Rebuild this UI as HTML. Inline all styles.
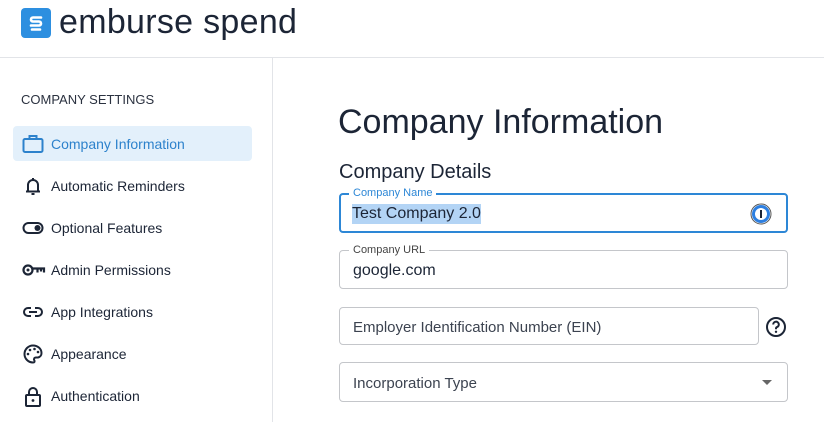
<!DOCTYPE html>
<html><head><style>
*{box-sizing:border-box;margin:0;padding:0}
body{width:824px;height:422px;overflow:hidden;background:#fff;font-family:"Liberation Sans",sans-serif;color:#1c2536;position:relative}
.hdr{position:absolute;left:0;top:0;width:824px;height:58px;border-bottom:1px solid #e2e4e8}
.side{position:absolute;left:272px;top:58px;width:1px;height:364px;background:#e2e4e8}
.abs{position:absolute}
.item{position:absolute;left:13px;width:239px;height:35px;display:flex;align-items:center;font-size:14px;color:#1c2536}
.item svg{position:absolute;left:9px;top:8px}
.item span{position:absolute;left:38px;top:10px}
.fld{position:absolute;left:339px;width:449px;border:1px solid #c4c6ca;border-radius:4px}
.fld .v{position:absolute;left:13px;font-size:16px;color:#1c2536}
.lbl{position:absolute;left:9px;top:-7px;background:#fff;padding:0 4px;font-size:11px;color:#444;line-height:12px}
.ph{position:absolute;left:13px;font-size:15px;color:#3c4350}
</style></head><body>
<div class="hdr">
 <div class="abs" style="left:21px;top:8px;width:30px;height:30px;background:#2d8fe0;border-radius:4px">
  <svg width="30" height="30" viewBox="0 0 30 30"><path d="M20 9.5H12a2 2 0 0 0 0 4h6a2 2 0 0 1 0 4H10M11 21.5h8" stroke="#fff" stroke-width="2.6" stroke-linecap="round" fill="none"/></svg>
 </div>
 <div class="abs" style="left:59px;top:0px;font-size:34px;line-height:44px;color:#1c2536;letter-spacing:0.3px">emburse spend</div>
</div>
<div class="side"></div>
<div class="abs" style="left:21px;top:92px;font-size:13px;color:#2b3240">COMPANY SETTINGS</div>
<div class="item" style="top:126px;background:#e3f0fb;border-radius:4px;color:#2d82cc">
 <svg width="22" height="20" viewBox="0 0 22 20"><rect x="1.5" y="5" width="19" height="13" rx="1.5" fill="none" stroke="#2d82cc" stroke-width="2"/><path d="M7.5 5V2h7v3" fill="none" stroke="#2d82cc" stroke-width="2"/></svg>
 <span>Company Information</span></div>
<div class="item" style="top:168px"><svg width="22" height="20" viewBox="0 0 22 20"><path d="M6 15V9a5 5 0 0 1 10 0v6M4 15.5h14M11 2v2M9.5 18h3" fill="none" stroke="#1c2536" stroke-width="2"/></svg><span>Automatic Reminders</span></div>
<div class="item" style="top:210px"><svg width="22" height="20" viewBox="0 0 22 20"><rect x="1.5" y="5" width="19" height="10" rx="5" fill="none" stroke="#1c2536" stroke-width="2"/><circle cx="15.5" cy="10" r="3" fill="#1c2536"/></svg><span>Optional Features</span></div>
<div class="item" style="top:252px"><svg width="24" height="20" viewBox="0 0 24 20"><circle cx="6" cy="10" r="4.5" fill="none" stroke="#1c2536" stroke-width="2.2"/><circle cx="6" cy="10" r="1.5" fill="#1c2536"/><path d="M10 8.5h12v4M15.5 8.5v4M19 8.5v3" fill="none" stroke="#1c2536" stroke-width="2.2"/></svg><span>Admin Permissions</span></div>
<div class="item" style="top:294px"><svg width="22" height="20" viewBox="0 0 22 20"><path d="M9 6H6a4 4 0 0 0 0 8h3M13 6h3a4 4 0 0 1 0 8h-3M7 10h8" fill="none" stroke="#1c2536" stroke-width="2"/></svg><span>App Integrations</span></div>
<div class="item" style="top:336px"><svg width="22" height="20" viewBox="0 0 22 20"><path d="M11 1.5a8.5 8.5 0 0 0 0 17c1.5 0 2-1 1.3-2.2-.8-1.3 0-2.8 1.7-2.8h2A4.5 4.5 0 0 0 19.5 9C19.5 4.8 15.7 1.5 11 1.5z" fill="none" stroke="#1c2536" stroke-width="2"/><circle cx="6" cy="10" r="1.3" fill="#1c2536"/><circle cx="8" cy="6" r="1.3" fill="#1c2536"/><circle cx="12.5" cy="5" r="1.3" fill="#1c2536"/><circle cx="16" cy="8" r="1.3" fill="#1c2536"/></svg><span>Appearance</span></div>
<div class="item" style="top:378px"><svg width="22" height="22" viewBox="0 0 22 22"><rect x="4" y="9" width="14" height="11" rx="1" fill="none" stroke="#1c2536" stroke-width="2"/><path d="M7 9V6a4 4 0 0 1 8 0v3" fill="none" stroke="#1c2536" stroke-width="2"/><circle cx="11" cy="14.5" r="1.4" fill="#1c2536"/></svg><span>Authentication</span></div>

<div class="abs" style="left:338px;top:103px;font-size:34px;color:#1c2536">Company Information</div>
<div class="abs" style="left:339px;top:161px;font-size:20px;color:#1c2536">Company Details</div>

<div class="fld" style="top:193px;height:40px;border:2px solid #2d87d6">
 <div class="lbl" style="top:-8px;left:8px;color:#2d87d6">Company Name</div>
 <div class="v" style="left:11px;top:9px;background:#b3d4f5;line-height:20px">Test Company 2.0</div>
 <svg class="abs" style="left:409px;top:8px" width="22" height="22" viewBox="0 0 22 22"><circle cx="11" cy="11" r="10" fill="#fff" stroke="#555" stroke-width="1"/><circle cx="11" cy="11" r="7.5" fill="none" stroke="#2d7fe0" stroke-width="3"/><rect x="10" y="7" width="2" height="8" fill="#1c2536"/></svg>
</div>
<div class="fld" style="top:250px;height:39px">
 <div class="lbl">Company URL</div>
 <div class="v" style="top:11px">google.com</div>
</div>
<div class="fld" style="top:307px;height:38px;width:420px">
 <div class="ph" style="top:11px">Employer Identification Number (EIN)</div>
</div>
<svg class="abs" style="left:765px;top:316px" width="22" height="22" viewBox="0 0 22 22"><circle cx="11" cy="11" r="9" fill="none" stroke="#1c2536" stroke-width="2"/><path d="M8.2 8.5a2.8 2.8 0 1 1 3.8 2.6c-.7.3-1 .8-1 1.5v.6" fill="none" stroke="#1c2536" stroke-width="2"/><circle cx="11" cy="15.8" r="1.2" fill="#1c2536"/></svg>
<div class="fld" style="top:362px;height:40px">
 <div class="ph" style="top:12px">Incorporation Type</div>
 <svg class="abs" style="left:421px;top:16px" width="12" height="7" viewBox="0 0 12 7"><path d="M1 1h10L6 6z" fill="#666"/></svg>
</div>
</body></html>
